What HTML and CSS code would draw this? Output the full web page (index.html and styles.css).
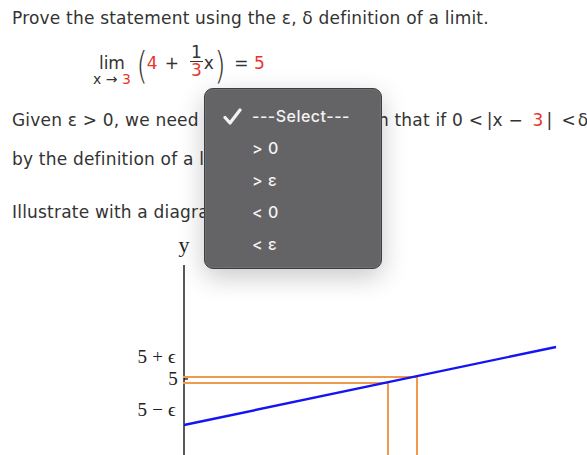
FILE: index.html
```html
<!DOCTYPE html>
<html>
<head>
<meta charset="utf-8">
<link rel="stylesheet" href="styles.css">
</head>
<body>
<div class="page">
  <p class="title">Prove the statement using the ε, δ definition of a limit.</p>
  <div class="limit">
    <span class="lim"><span class="lim-word">lim</span><span class="lim-sub">x → <span class="red">3</span></span></span>
    <span class="paren open">(</span>
    <span class="red four">4</span><span class="op">+</span>
    <span class="frac"><span class="num">1</span><span class="den red">3</span></span><span class="var">x</span>
    <span class="paren close">)</span>
    <span class="op eq">=</span><span class="red five">5</span>
  </div>
  <p class="line given">Given ε &gt; 0, we need <span class="sel"></span>such that if 0 &lt;<span class="bar1">|</span>x −<span class="red n3">3</span><span class="bar2">|</span><span class="lt2">&lt;</span><span class="dl">δ</span></p>
  <p class="line second">by the definition of a limit.</p>
  <p class="line third">Illustrate with a diagram.</p>
  <svg class="graph" width="587" height="230" viewBox="0 0 587 230">
    <text x="184" y="25" class="g-label y-label" text-anchor="middle">y</text>
    <line x1="184" y1="38" x2="184" y2="230" stroke="#000" stroke-width="1.3"/>
    <text x="176" y="136" class="g-label" text-anchor="end">5 + ϵ</text>
    <text x="178" y="158" class="g-label" text-anchor="end">5</text>
    <text x="176" y="189" class="g-label" text-anchor="end">5 − ϵ</text>
    <polyline points="183,150 417,150 417,230" fill="none" stroke="#f19a4d" stroke-width="2"/>
    <polyline points="183,156 388,156 388,230" fill="none" stroke="#f19a4d" stroke-width="2"/>
    <line x1="184" y1="152" x2="188" y2="152" stroke="#000" stroke-width="1.2"/>
    <line x1="184" y1="198" x2="556" y2="120" stroke="#1414f5" stroke-width="2.4"/>
  </svg>
  <div class="popup">
    <div class="item"><svg class="check" width="19" height="17" viewBox="0 0 19 17"><path d="M2 9.5 L7 15 L17 2" fill="none" stroke="#f2f2f2" stroke-width="3.2" stroke-linecap="round" stroke-linejoin="round"/></svg>---Select---</div>
    <div class="item">&gt; 0</div>
    <div class="item">&gt; ε</div>
    <div class="item">&lt; 0</div>
    <div class="item">&lt; ε</div>
  </div>
</div>
</body>
</html>
```
FILE: styles.css
```css
html, body {
  margin: 0;
  padding: 0;
  background: #fff;
}
.page {
  position: relative;
  width: 587px;
  height: 455px;
  overflow: hidden;
  font-family: "DejaVu Sans", Verdana, sans-serif;
  font-size: 17px;
  letter-spacing: 0.2px;
  color: #333;
}
p { margin: 0; }
.title {
  padding: 9px 0 0 12px;
  line-height: 18px;
  white-space: nowrap;
}
.red { color: #e8352b; }
.limit {
  display: flex;
  align-items: center;
  height: 44px;
  margin-top: 14px;
  padding-left: 93px;
  letter-spacing: 0;
}
.lim {
  display: inline-flex;
  flex-direction: column;
  align-items: center;
  margin-top: 15px;
}
.lim-word { line-height: 18px; }
.lim-sub { font-size: 14px; line-height: 15px; }
.paren {
  display: inline-flex;
  justify-content: center;
  width: 8px;
  font-size: 38px;
  font-weight: 200;
  line-height: 36px;
  transform: scaleX(0.75);
  margin-top: 4px;
}
.open { margin-left: 7px; }
.close { margin-left: 2.5px; }
.four { margin-left: 1px; }
.op { margin: 0 11px 0 7px; }
.eq { margin: 0 0 0 10px; }
.five { margin-left: 5.5px; }
.frac {
  display: inline-flex;
  flex-direction: column;
  align-items: center;
  font-size: 17px;
  line-height: 15px;
  margin-top: -3px;
}
.num {
  border-bottom: 1px solid #333;
  padding: 0 1px 1px;
}
.den { padding-top: 1px; }
.var { font-style: normal; margin-left: 1px; }
.line {
  padding-left: 12px;
  white-space: nowrap;
  line-height: 18px;
}
.given { margin-top: 26px; }
.sel {
  display: inline-block;
  width: 144px;
  letter-spacing: 0;
}
.bar1 { margin-left: 3.5px; }
.n3 { margin-left: 9.5px; }
.bar2 { margin-left: 3px; }
.lt2 { margin-left: 9px; }
.dl { margin-left: 2px; }
.second { margin-top: 21px; }
.third { margin-top: 35px; }
.graph {
  display: block;
  margin-top: 6px;
}
.g-label {
  font-family: "Liberation Serif", "DejaVu Serif", serif;
  font-size: 19px;
  fill: #222;
}
.y-label { font-size: 22px; }
.popup {
  position: absolute;
  left: 204px;
  top: 88px;
  width: 178px;
  height: 181px;
  box-sizing: border-box;
  padding-top: 11px;
  background: #646467;
  border: 1px solid #3e3e40;
  border-radius: 9px;
  box-shadow: inset 0 0 0 1px rgba(255,255,255,0.08), 0 8px 26px rgba(0,0,0,0.22);
  font-family: "Inter", "Liberation Sans", sans-serif;
  font-size: 16px;
  letter-spacing: 0.5px;
  font-weight: 500;
  color: #f3f3f3;
}
.item {
  position: relative;
  height: 32px;
  display: flex;
  align-items: center;
  padding-left: 47px;
}
.check {
  position: absolute;
  left: 18px;
  top: 8px;
}
```
